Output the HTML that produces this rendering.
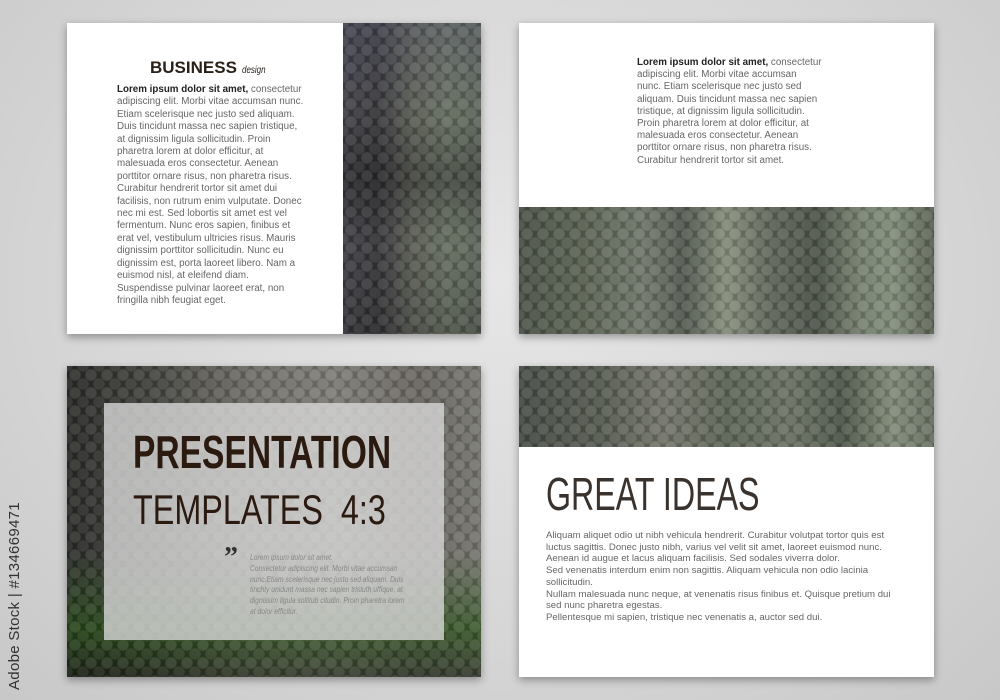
<!DOCTYPE html>
<html><head><meta charset="utf-8"><style>
*{margin:0;padding:0;box-sizing:border-box}
body{width:1000px;height:700px;overflow:hidden;background:radial-gradient(ellipse at 50% 40%,#e6e6e6 0%,#d6d6d6 60%,#c8c8c8 100%);font-family:"Liberation Sans",sans-serif;position:relative}
.s{position:absolute;background:#fff;box-shadow:0 3px 8px rgba(0,0,0,.35);overflow:hidden}
.hex{position:absolute}
.hex::after{content:"";position:absolute;inset:0;background:radial-gradient(circle at 50% 50%,rgba(255,255,255,.10) 0 5px,rgba(0,0,0,.14) 6.5px 8px),radial-gradient(circle at 50% 50%,rgba(255,255,255,.08) 0 5px,rgba(0,0,0,.14) 6.5px 8px);background-size:16px 18px,16px 18px;background-position:0 0,8px 9px}
.t{position:absolute;color:#666;font-size:9.8px;line-height:12.4px}
.t b{color:#222}
.sx{position:absolute;transform-origin:0 0;white-space:nowrap}
</style></head><body>
<div style="position:absolute;left:6px;top:690px;transform:rotate(-90deg);transform-origin:0 0;font-size:15px;color:#333;white-space:nowrap;letter-spacing:.3px">Adobe Stock | #134669471</div>

<div class="s" style="left:67px;top:23px;width:414px;height:311px">
 <div style="position:absolute;left:83px;top:35px;font-size:17px;font-weight:bold;color:#2a2018">BUSINESS <i style="font-size:10px;font-weight:normal;display:inline-block;transform:scaleX(.8);transform-origin:0 0">design</i></div>
 <div class="t" style="left:50px;top:61px;width:190px"><b>Lorem ipsum dolor sit amet,</b> consectetur adipiscing elit. Morbi vitae accumsan nunc. Etiam scelerisque nec justo sed aliquam. Duis tincidunt massa nec sapien tristique, at dignissim ligula sollicitudin. Proin pharetra lorem at dolor efficitur, at malesuada eros consectetur. Aenean porttitor ornare risus, non pharetra risus. Curabitur hendrerit tortor sit amet dui facilisis, non rutrum enim vulputate. Donec nec mi est. Sed lobortis sit amet est vel fermentum. Nunc eros sapien, finibus et erat vel, vestibulum ultricies risus. Mauris dignissim porttitor sollicitudin. Nunc eu dignissim est, porta laoreet libero. Nam a euismod nisl, at eleifend diam. Suspendisse pulvinar laoreet erat, non fringilla nibh feugiat eget.</div>
 <div class="hex" style="left:276px;top:0;width:138px;height:311px;background:linear-gradient(180deg,rgba(90,90,120,.35) 0%,rgba(0,0,0,0) 30%,rgba(0,0,0,.3) 50%,rgba(0,0,0,0) 70%,rgba(0,0,0,.2) 100%),linear-gradient(90deg,#4a4a50 0%,#3e3e42 25%,#66695f 50%,#747e6e 75%,#6a7466 100%)"></div>
</div>

<div class="s" style="left:519px;top:23px;width:415px;height:311px">
 <div class="t" style="left:118px;top:34px;width:186px;line-height:12.2px"><b>Lorem ipsum dolor sit amet,</b> consectetur adipiscing elit. Morbi vitae accumsan nunc. Etiam scelerisque nec justo sed aliquam. Duis tincidunt massa nec sapien tristique, at dignissim ligula sollicitudin. Proin pharetra lorem at dolor efficitur, at malesuada eros consectetur. Aenean porttitor ornare risus, non pharetra risus. Curabitur hendrerit tortor sit amet.</div>
 <div class="hex" style="left:0;top:184px;width:415px;height:127px;background:linear-gradient(90deg,#545c50 0%,#66705e 15%,#80887a 30%,#5e665a 40%,#9aa48e 50%,#6e7668 60%,#545c50 72%,#86927e 82%,#94a28c 90%,#68705f 100%)"></div>
</div>

<div class="s" style="left:67px;top:366px;width:414px;height:311px">
 <div class="hex" style="left:0;top:0;width:414px;height:311px;background:linear-gradient(180deg,rgba(0,0,0,0) 60%,rgba(40,90,20,.7) 85%,rgba(20,30,10,.6) 100%),linear-gradient(90deg,#2f312d 0%,#4a4a45 20%,#807e76 45%,#908e86 65%,#78746e 85%,#86867e 100%)"></div>
 <div style="position:absolute;left:37px;top:37px;width:340px;height:237px;background:rgba(215,215,215,.8)"></div>
 <div class="sx" style="left:66px;top:59px;font-size:46px;font-weight:bold;color:#2a1a10;transform:scaleX(.73)">PRESENTATION</div>
 <div class="sx" style="left:66px;top:120px;font-size:42px;color:#2a1a10;transform:scaleX(.77)">TEMPLATES&nbsp;&nbsp;4:3</div>
 <div style="position:absolute;left:157px;top:176px;font-size:28px;font-weight:bold;color:#333;font-family:'Liberation Serif',serif">”</div>
 <div style="position:absolute;left:183px;top:187px;width:190px;font-size:8px;line-height:10.8px;color:#888;font-style:italic;transform:scaleX(.84);transform-origin:0 0">Lorem ipsum dolor sit amet.<br>Consectetur adipiscing elit. Morbi vitae accumsan nunc.Etiam scelerisque nec justo sed aliquam. Duis tinchty unidunt massa nec sapien tristuth uffique, at dignissim ligula sollitub citudin. Proin pharetra lorem at dolor efficitur.</div>
</div>

<div class="s" style="left:519px;top:366px;width:415px;height:311px">
 <div class="hex" style="left:0;top:0;width:415px;height:81px;background:linear-gradient(90deg,#50564e 0%,#62685c 20%,#84867a 35%,#687262 50%,#7a8272 65%,#586254 78%,#94a08a 90%,#768070 100%)"></div>
 <div class="sx" style="left:27px;top:101px;font-size:46px;color:#3a322c;transform:scaleX(.7)">GREAT IDEAS</div>
 <div class="t" style="left:27px;top:164px;width:360px;line-height:11.7px;font-size:9.6px">Aliquam aliquet odio ut nibh vehicula hendrerit. Curabitur volutpat tortor quis est luctus sagittis. Donec justo nibh, varius vel velit sit amet, laoreet euismod nunc. Aenean id augue et lacus aliquam facilisis. Sed sodales viverra dolor.<br>Sed venenatis interdum enim non sagittis. Aliquam vehicula non odio lacinia sollicitudin.<br>Nullam malesuada nunc neque, at venenatis risus finibus et. Quisque pretium dui sed nunc pharetra egestas.<br>Pellentesque mi sapien, tristique nec venenatis a, auctor sed dui.</div>
</div>
</body></html>
